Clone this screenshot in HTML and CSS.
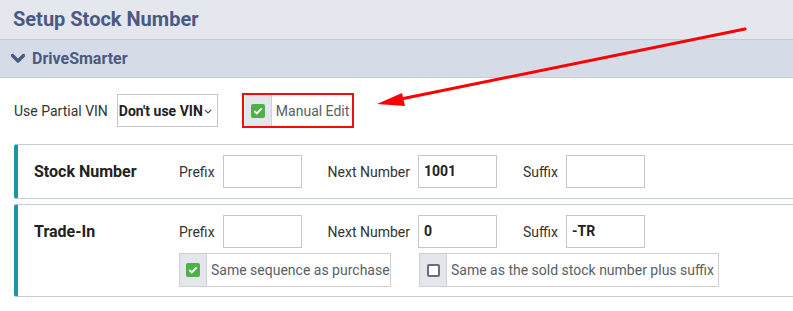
FILE: index.html
```html
<!DOCTYPE html>
<html lang="en">
<head>
    <meta charset="UTF-8">
    <meta name="viewport" content="width=device-width, initial-scale=1.0">
    <title>Setup Stock Number</title>
    <link rel="stylesheet" href="styles.css">
</head>
<body>
    <div class="page-title">Setup Stock Number</div>
    <div class="section-bar">
        <svg class="chevron" width="14" height="10" viewBox="0 0 14 10">
            <path d="M1.5 2.5 L7 8 L12.5 2.5" fill="none" stroke="#4b5a82" stroke-width="3.4" stroke-linecap="round" stroke-linejoin="round"/>
        </svg>
        <span>DriveSmarter</span>
    </div>

    <div class="vin-row">
        <label class="vin-label">Use Partial VIN</label>
        <div class="select-box">
            <span>Don't use VIN</span>
            <svg width="8" height="5" viewBox="0 0 8 5"><path d="M0.8 0.8 L4 4 L7.2 0.8" fill="none" stroke="#444" stroke-width="1.1"/></svg>
        </div>
        <div class="highlight">
            <div class="check-group">
                <div class="check-cell"><span class="check on"><svg width="10" height="8" viewBox="0 0 10 8"><path d="M1.3 4 L3.8 6.4 L8.7 1.3" fill="none" stroke="#fff" stroke-width="1.9"/></svg></span></div>
                <div class="check-text">Manual Edit</div>
            </div>
        </div>
    </div>

    <div class="card">
        <div class="card-title">Stock Number</div>
        <div class="card-body">
            <div class="fields">
                <label>Prefix</label>
                <div class="input"></div>
                <label class="next">Next Number</label>
                <div class="input">1001</div>
                <label class="next">Suffix</label>
                <div class="input"></div>
            </div>
        </div>
    </div>

    <div class="card">
        <div class="card-title">Trade-In</div>
        <div class="card-body">
            <div class="fields">
                <label>Prefix</label>
                <div class="input"></div>
                <label class="next">Next Number</label>
                <div class="input">0</div>
                <label class="next">Suffix</label>
                <div class="input">-TR</div>
            </div>
            <div class="checks">
                <div class="check-group wide-1">
                    <div class="check-cell"><span class="check on"><svg width="10" height="8" viewBox="0 0 10 8"><path d="M1.3 4 L3.8 6.4 L8.7 1.3" fill="none" stroke="#fff" stroke-width="1.9"/></svg></span></div>
                    <div class="check-text">Same sequence as purchase</div>
                </div>
                <div class="check-group wide-2">
                    <div class="check-cell"><span class="check off"></span></div>
                    <div class="check-text">Same as the sold stock number plus suffix</div>
                </div>
            </div>
        </div>
    </div>

    <svg class="arrow" width="793" height="311" viewBox="0 0 793 311">
        <line x1="745" y1="29" x2="396" y2="100" stroke="#ff0000" stroke-width="3" stroke-linecap="round"/>
        <polygon points="377,104 402,93 405,106" fill="#ff0000"/>
    </svg>
</body>
</html>
```

FILE: styles.css
```css
body {
    margin: 0;
    font-family: Roboto, "Liberation Sans", sans-serif;
    font-size: 14px;
    color: #333;
    background: #fff;
    overflow: hidden;
    position: relative;
    width: 793px;
    height: 311px;
}
.page-title {
    height: 39px;
    background: #e4e7ed;
    border-bottom: 1px solid #c7cbd1;
    color: #4b5a82;
    font-size: 20px;
    font-weight: bold;
    line-height: 38px;
    padding-left: 13px;
}
.section-bar {
    height: 37px;
    background: #d5dce8;
    border-bottom: 1px solid #c7ccd4;
    color: #4b5a82;
    font-size: 16px;
    font-weight: bold;
    display: flex;
    align-items: center;
    padding-left: 11px;
    gap: 7px;
}
.chevron {
    margin-top: -1px;
}
.vin-row {
    display: flex;
    align-items: center;
    margin: 15px 0 0 14px;
    height: 35px;
}
.vin-label {
    margin-right: 9px;
}
.select-box {
    height: 31px;
    border: 1px solid #c6c6c6;
    display: flex;
    align-items: center;
    justify-content: space-between;
    padding: 0 5px 0 1px;
    font-weight: bold;
    color: #222;
    width: 93px;
}
.select-box svg {
    margin-top: 1px;
}
.highlight {
    margin-left: 24px;
    border: 2px solid #f20d0d;
    height: 31px;
    width: 108px;
    display: flex;
}
.check-group {
    display: flex;
    border: 1px solid #d0d0d0;
    height: 32px;
    box-sizing: border-box;
    background: #fff;
}
.highlight .check-group {
    border: none;
    height: 31px;
    width: 108px;
    margin-left: 1px;
}
.check-cell {
    width: 26px;
    background: #e3e6eb;
    border-right: 1px solid #d0d0d0;
    display: flex;
    align-items: center;
    justify-content: center;
}
.check {
    width: 14px;
    height: 14px;
    border-radius: 2px;
    box-sizing: border-box;
    display: flex;
    align-items: center;
    justify-content: center;
}
.check.on {
    background: #4eb048;
}
.check.off {
    background: #fff;
    border: 2px solid #6d6b7e;
    border-radius: 2px;
    width: 13px;
    height: 13px;
}
.check-text {
    color: #5a5e66;
    display: flex;
    align-items: center;
    padding-left: 4px;
    white-space: nowrap;
}
.card {
    display: flex;
    margin: 16px 0 0 14px;
    width: 800px;
    border: 1px solid #c8ccd4;
    border-left: 4px solid #1a95aa;
    border-radius: 3px 0 0 3px;
    padding: 10px 0 9px 16px;
}
.card + .card {
    margin-top: 5px;
}
.card-title {
    width: 145px;
    font-size: 16px;
    font-weight: bold;
    color: #222;
    height: 34px;
    line-height: 34px;
}
.fields {
    display: flex;
    align-items: center;
}
.fields label {
    margin-right: 8px;
}
.fields .next {
    margin-left: 26px;
}
.input {
    width: 66px;
    height: 31px;
    border: 1px solid #c6c6c6;
    padding: 0 6px 0 5px;
    font-weight: bold;
    color: #222;
    line-height: 31px;
}
.checks {
    display: flex;
    margin-top: 5px;
    gap: 28px;
}
.wide-1 {
    width: 212px;
    height: 34px;
}
.wide-2 {
    width: 300px;
    height: 34px;
}
.arrow {
    position: absolute;
    left: 0;
    top: 0;
    pointer-events: none;
}
```
